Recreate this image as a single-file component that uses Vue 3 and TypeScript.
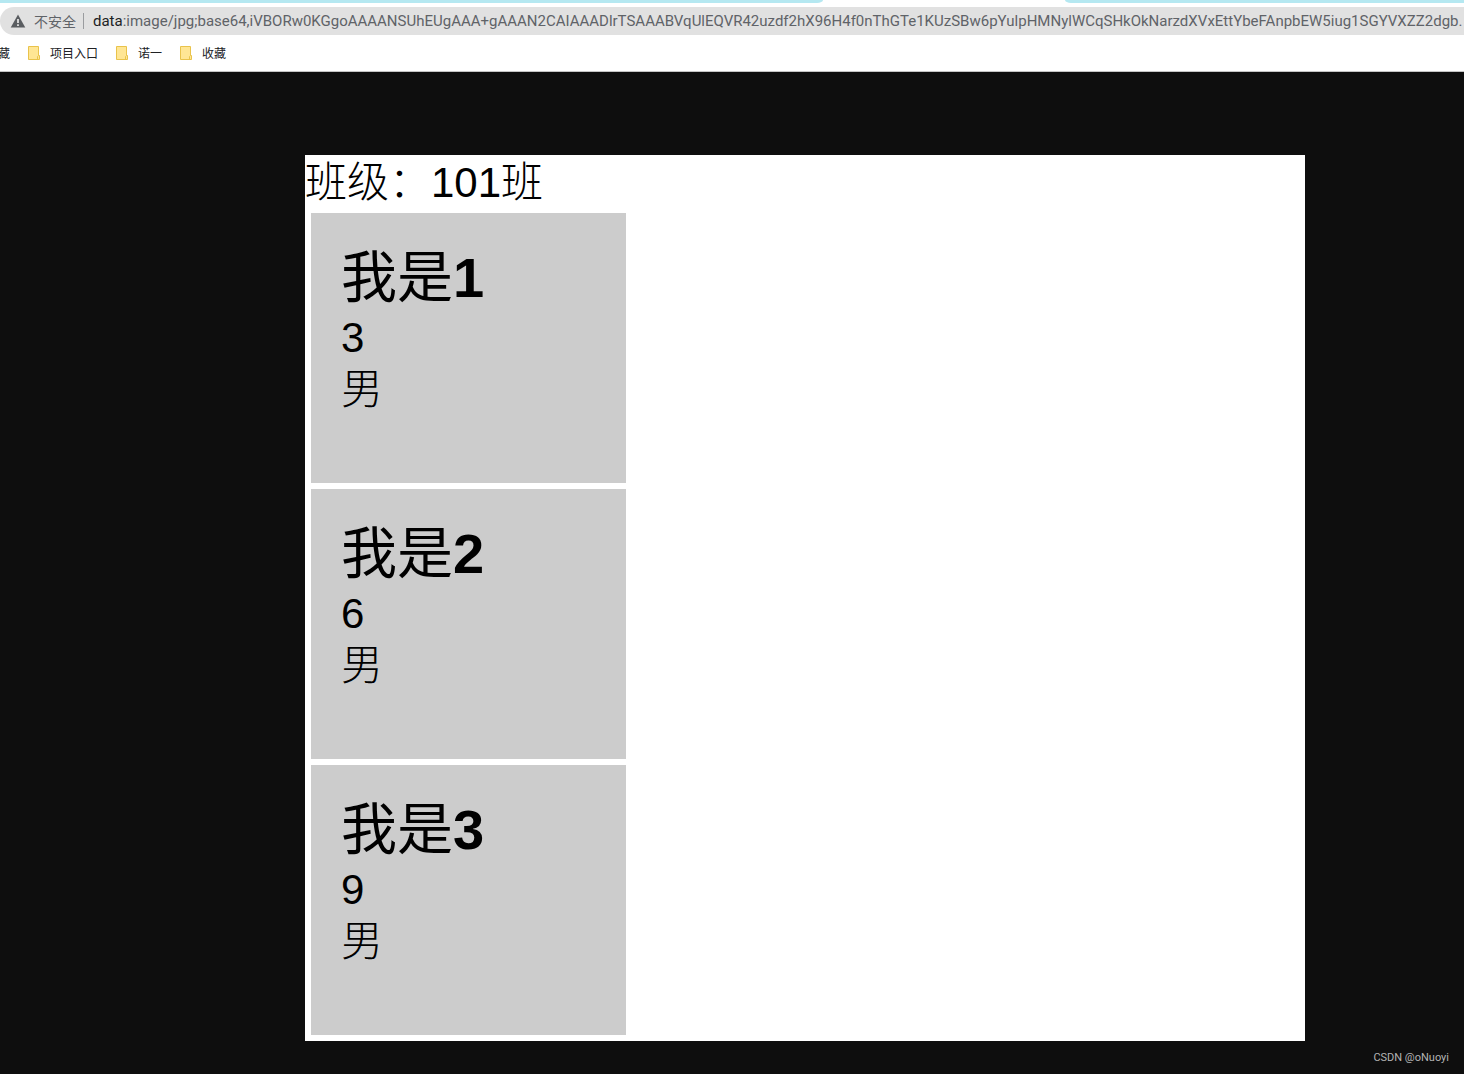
<script setup lang="ts">
interface Student {
  name: string
  no: number
  age: number
  sex: string
}

const students: Student[] = [
  { name: '我是', no: 1, age: 3, sex: '男' },
  { name: '我是', no: 2, age: 6, sex: '男' },
  { name: '我是', no: 3, age: 9, sex: '男' },
]

const bookmarks: string[] = ['项目入口', '诺一', '收藏']

const address =
  ':image/jpg;base64,iVBORw0KGgoAAAANSUhEUgAAA+gAAAN2CAIAAADlrTSAAABVqUlEQVR42uzdf2hX96H4f0nThGTe1KUzSBw6pYulpHMNylWCqSHkOkNarzdXVxEttYbeFAnpbEW5iug1SGYVXZZ2dgb.'
</script>

<template>
  <div class="window">
    <header class="chrome">
      <div class="tabs"><span class="tab-left"></span><span class="tab"></span><span class="tab-right"></span></div>
      <div class="omnibox">
        <svg class="warn" viewBox="0 0 16 14" aria-hidden="true">
          <path d="M8 0.5 15.3 13.5H0.7Z" fill="#5a5d61" />
          <path d="M7.1 5h1.8v4H7.1zM7.1 10.2h1.8v1.7H7.1z" fill="#e1e1e1" />
        </svg>
        <span class="insecure">不安全</span>
        <span class="url"><span class="scheme">data</span>{{ address }}</span>
      </div>
      <nav class="bookmarks">
        <a class="bookmark" href="#">藏</a>
        <a v-for="b in bookmarks" :key="b" class="bookmark" href="#">
          <svg class="folder" viewBox="0 0 13 14" aria-hidden="true">
            <path d="M.5.5h10v9h1v4H.5z" fill="#ffe694" stroke="#e9c34b" />
            <path d="M9.5 13.5v-3l1-1" fill="none" stroke="#e9c34b" />
          </svg>
          <span>{{ b }}</span>
        </a>
      </nav>
    </header>
    <main class="viewer">
      <section class="sheet">
        <p class="line title">班级：101班</p>
        <article v-for="s in students" :key="s.no" class="card">
          <h1 class="name">{{ s.name }}<b>{{ s.no }}</b></h1>
          <p class="line">{{ s.age }}</p>
          <p class="line">{{ s.sex }}</p>
        </article>
      </section>
      <footer class="credit">CSDN @oNuoyi</footer>
    </main>
  </div>
</template>

<style>
body {
  margin: 0;
  background: #0e0e0e;
}
</style>

<style scoped>
.window {
  min-height: 100vh;
  display: flex;
  flex-direction: column;
  overflow: hidden;
}
.chrome {
  box-sizing: border-box;
  height: 72px;
  background: #fff;
  border-bottom: 1px solid #c4c4c4;
}
.tabs {
  display: flex;
  height: 3px;
  margin-bottom: 4px;
}
.tab-left,
.tab-right {
  background: #b5e8f1;
}
.tab-left {
  width: 823px;
  border-bottom-right-radius: 6px 3px;
}
.tab {
  width: 242px;
}
.tab-right {
  flex: 1;
  border-bottom-left-radius: 6px 3px;
}
.omnibox {
  display: flex;
  align-items: center;
  height: 28px;
  padding-left: 10px;
  border-radius: 14px 0 0 14px;
  background: #e1e1e1;
  color: #5f6368;
  font: 14px/28px "Noto Sans CJK SC", sans-serif;
  white-space: nowrap;
  overflow: hidden;
}
.warn {
  flex: none;
  width: 16px;
  height: 14px;
  margin-right: 8px;
}
.insecure {
  padding-right: 7px;
  border-right: 1px solid #9a9c9f;
  line-height: 16px;
}
.url {
  padding-left: 9px;
  font-family: Roboto, sans-serif;
  font-size: 15px;
}
.scheme {
  color: #202124;
}
.bookmarks {
  display: flex;
  align-items: center;
  gap: 18px;
  height: 36px;
  margin-left: -2px;
}
.bookmark {
  display: flex;
  align-items: center;
  gap: 9px;
  color: #202124;
  font: 12px/16px "Noto Sans CJK SC", sans-serif;
  text-decoration: none;
}
.folder {
  width: 13px;
  height: 14px;
}
.viewer {
  flex: 1;
  display: flex;
  flex-direction: column;
  background: #0e0e0e;
}
.sheet {
  display: flow-root;
  margin: 83px 159px 0 305px;
  background: #fff;
  color: #000;
}
.line,
.name {
  margin: 0;
  font: 300 42px/52px "Liberation Sans", "Noto Sans CJK SC", sans-serif;
}
.title {
  box-sizing: border-box;
  height: 52px;
  padding-top: 2px;
}
.card {
  box-sizing: border-box;
  width: 315px;
  height: 270px;
  margin: 6px;
  padding: 31px 30px;
  background: #ccc;
}
.name {
  font-size: 56px;
  font-weight: 400;
  line-height: 68px;
}
.name b {
  font-weight: 700;
}
.credit {
  padding: 9px 15px 8px 0;
  color: #b4b4b4;
  font: 11px/16px Roboto, sans-serif;
  text-align: right;
}
</style>
